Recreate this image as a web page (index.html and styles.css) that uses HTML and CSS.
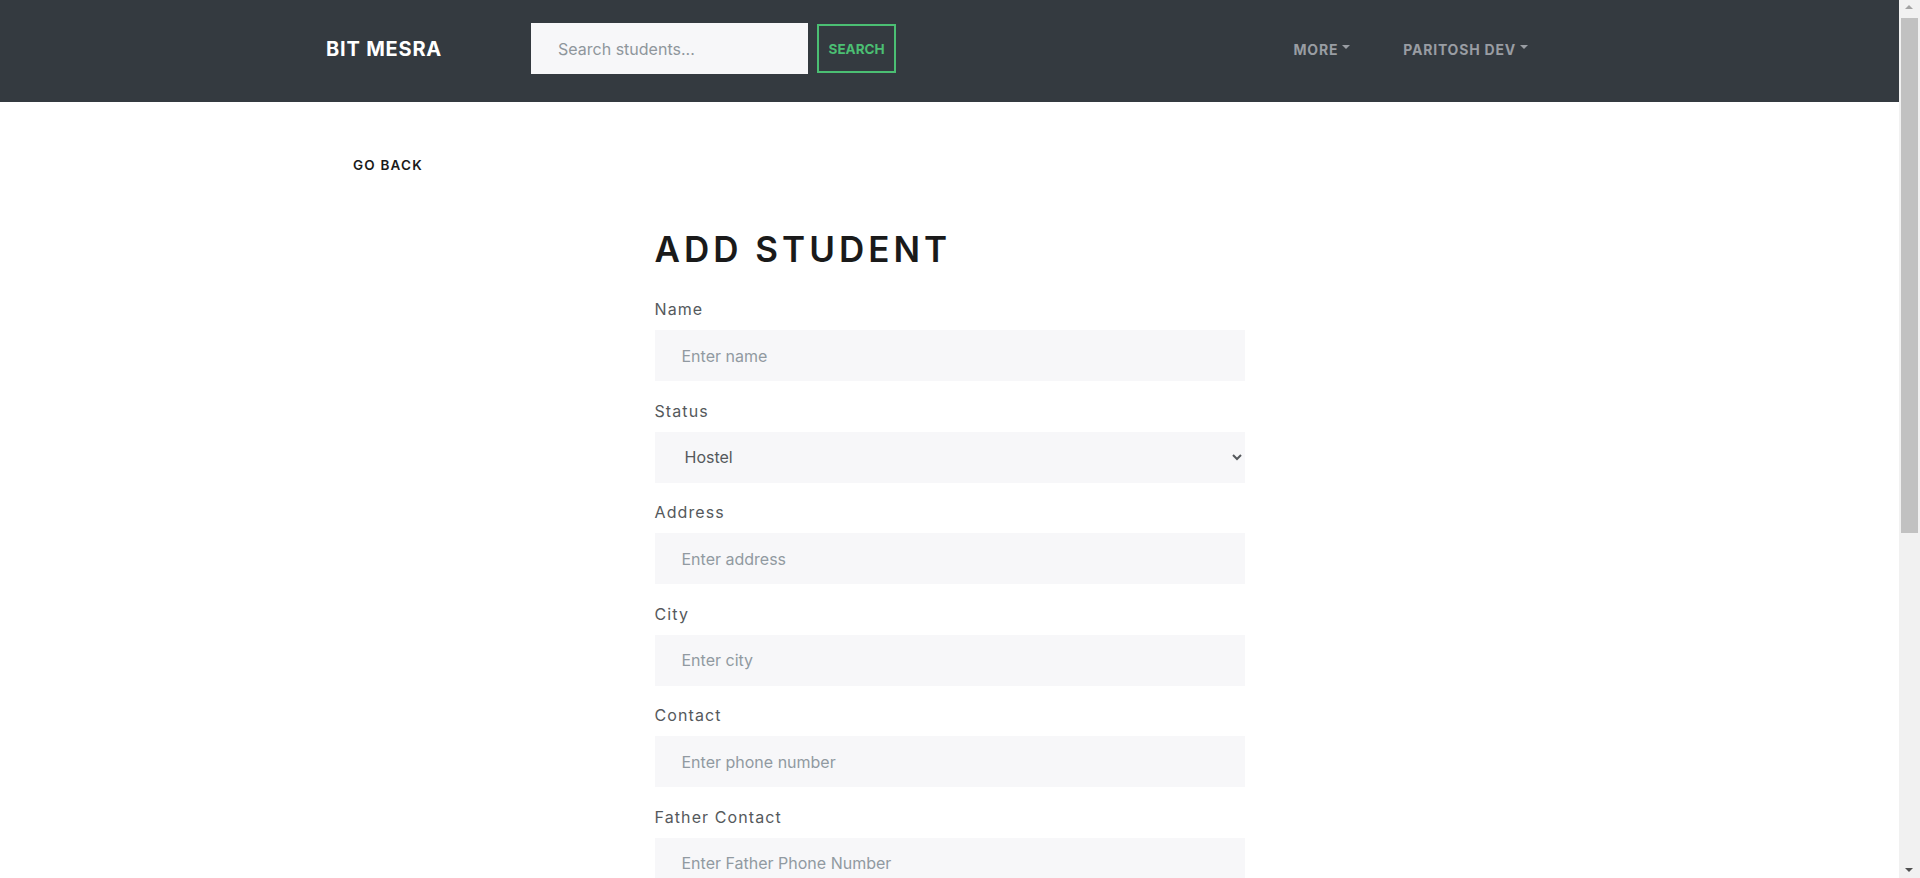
FILE: index.html
```html
<!DOCTYPE html>
<html lang="en">
<head>
<meta charset="utf-8">
<title>Add Student</title>
<link rel="stylesheet" href="styles.css">
</head>
<body>
<nav class="navbar">
  <div class="container nav-inner">
    <a class="brand" href="#">BIT MESRA</a>
    <form class="search">
      <input class="search-input" type="text" placeholder="Search students...">
      <button class="search-btn" type="button">SEARCH</button>
    </form>
    <ul class="nav-links">
      <li><a href="#" class="nav-link">MORE<span class="caret"></span></a></li>
      <li><a href="#" class="nav-link">PARITOSH DEV<span class="caret"></span></a></li>
    </ul>
  </div>
</nav>
<main class="container page">
  <a href="#" class="go-back">GO BACK</a>
  <section class="form-wrap">
    <h2 class="title">ADD STUDENT</h2>
    <form class="student-form">
      <div class="group">
        <label class="label">Name</label>
        <input class="control" type="text" placeholder="Enter name">
      </div>
      <div class="group">
        <label class="label">Status</label>
        <select class="control select">
          <option>Hostel</option>
          <option>Day Scholar</option>
        </select>
      </div>
      <div class="group">
        <label class="label">Address</label>
        <input class="control" type="text" placeholder="Enter address">
      </div>
      <div class="group">
        <label class="label">City</label>
        <input class="control" type="text" placeholder="Enter city">
      </div>
      <div class="group">
        <label class="label">Contact</label>
        <input class="control" type="text" placeholder="Enter phone number">
      </div>
      <div class="group">
        <label class="label">Father Contact</label>
        <input class="control" type="text" placeholder="Enter Father Phone Number">
      </div>
      <div class="group">
        <label class="label">Image</label>
        <input class="control" type="text" placeholder="Enter image url">
      </div>
      <button class="submit" type="button">SUBMIT</button>
    </form>
  </section>
</main>
<div class="scrollbar" aria-hidden="true">
  <span class="sb-up"></span>
  <span class="sb-thumb"></span>
  <span class="sb-down"></span>
</div>
</body>
</html>
```
FILE: styles.css
```css
* { box-sizing: border-box; }

html, body {
  margin: 0;
  padding: 0;
}

body {
  font-family: Inter, "Noto Sans", "Liberation Sans", sans-serif;
  color: #55595c;
  background: #ffffff;
  padding-right: 21px;
}

a { text-decoration: none; }

.container {
  width: 1247px;
  margin: 0 auto;
}

/* NAVBAR */
.navbar {
  background: #343a40;
  height: 102px;
  padding-bottom: 5px;
}

.nav-inner {
  display: flex;
  align-items: center;
  height: 100%;
}

.brand {
  color: #ffffff;
  font-size: 20px;
  font-weight: 700;
  letter-spacing: 0.8px;
  line-height: 24px;
  margin-right: 89px;
}

.search {
  display: flex;
  align-items: center;
  gap: 9px;
  margin: 0;
}

.search-input {
  width: 277px;
  height: 51px;
  border: none;
  outline: none;
  background: #f7f7f9;
  padding: 0 27px;
  font-family: inherit;
  font-size: 16px;
  color: #55595c;
}

.search-input::placeholder { color: #8f969c; }

.search-btn {
  width: 79px;
  height: 49px;
  background: transparent;
  border: 2px solid #4bbf73;
  color: #4bbf73;
  font-family: inherit;
  font-size: 13.5px;
  font-weight: 700;
  padding: 0;
  cursor: pointer;
}

.nav-links {
  list-style: none;
  display: flex;
  align-items: center;
  gap: 53px;
  margin: 0 45px 0 auto;
  padding: 0;
}

.nav-link {
  color: #999da3;
  font-size: 14px;
  font-weight: 700;
  letter-spacing: 0.8px;
  display: inline-flex;
  align-items: center;
}

.caret {
  display: inline-block;
  margin-left: 4px;
  border-top: 4px solid #999da3;
  border-left: 4px solid transparent;
  border-right: 4px solid transparent;
  position: relative;
  top: -2px;
}

/* PAGE */
.page {
  padding-top: 52px;
  padding-bottom: 60px;
}

.go-back {
  display: inline-block;
  margin-left: 27px;
  color: #1a1a1a;
  font-size: 13.5px;
  font-weight: 600;
  letter-spacing: 1.2px;
  line-height: 20px;
}

.form-wrap {
  width: 590px;
  margin: 53px auto 0;
}

.title {
  margin: 0 0 27px;
  color: #1a1a1a;
  font-size: 35px;
  font-weight: 600;
  letter-spacing: 4px;
  line-height: 42px;
}

.group {
  margin-bottom: 17.5px;
}

.label {
  display: block;
  font-size: 16px;
  line-height: 24px;
  letter-spacing: 1.1px;
  color: #55595c;
  margin-bottom: 9px;
}

.control {
  display: block;
  width: 100%;
  height: 51px;
  border: none;
  outline: none;
  background-color: #f7f7f9;
  padding: 0 27px;
  font-family: inherit;
  font-size: 16px;
  color: #55595c;
  border-radius: 0;
}

.control::placeholder { color: #919aa1; }

.select {
  padding: 0 12px 0 26px;
}

.submit {
  margin-top: 10px;
  height: 51px;
  padding: 0 30px;
  border: none;
  background: #1a1a1a;
  color: #fff;
  font-family: inherit;
  font-size: 14px;
  font-weight: 600;
  letter-spacing: 1px;
}

/* Fake browser scrollbar (overlay) */
.scrollbar {
  position: fixed;
  top: 0;
  right: 0;
  width: 21px;
  height: 100vh;
  background: #f1f1f1;
}

.sb-thumb {
  position: absolute;
  top: 18px;
  left: 2px;
  width: 17px;
  height: 515px;
  background: #c1c1c1;
}

.sb-up,
.sb-down {
  position: absolute;
  left: 6px;
  width: 0;
  height: 0;
  border-left: 4.5px solid transparent;
  border-right: 4.5px solid transparent;
}

.sb-up {
  top: 5px;
  border-bottom: 4px solid #a3a3a3;
}

.sb-down {
  bottom: 6px;
  border-top: 4px solid #505050;
}
```
